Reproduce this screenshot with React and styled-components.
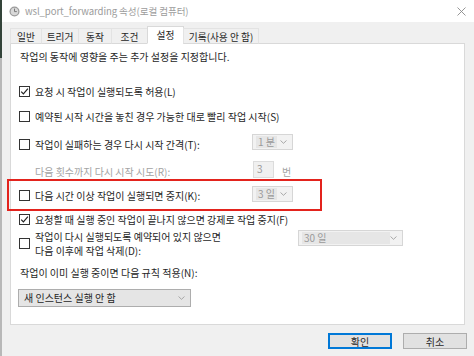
import React from "react";
import styled, { createGlobalStyle } from "styled-components";

const Global = createGlobalStyle`
  html, body { margin: 0; padding: 0; }
  body {
    width: 474px; height: 356px; overflow: hidden;
    font-family: "Noto Sans CJK KR", "Noto Sans", sans-serif;
    font-size: 10px; color: #262626; background: #f0f0f0;
  }
`;

const Screen = styled.div`
  display: flex; width: 474px; height: 356px;
`;
const EdgeStrip = styled.div`
  width: 2px; flex: 0 0 2px;
  background: linear-gradient(#34443a 0, #34443a 58px, #b8b8b8 58px, #b8b8b8 100%);
`;
const Window = styled.div`
  flex: 1; display: flex; flex-direction: column; background: #f0f0f0;
`;
const TitleBar = styled.div`
  height: 22px; background: #fff; display: flex; align-items: center;
  padding: 0 8px 0 7px; gap: 5px;
`;
const TitleText = styled.span`
  flex: 1; color: #9c9c9c; font-size: 9.6px; letter-spacing: -0.1px;
`;
const CloseBtn = styled.div`
  width: 10px; height: 10px; display: flex; align-items: center; justify-content: center;
`;
const Body = styled.div`
  flex: 1; display: flex; flex-direction: column; padding: 4px 9px 0 8px;
`;
const TabStrip = styled.div`
  display: flex; align-items: flex-end; height: 18px; margin-bottom: -1px;
  position: relative; z-index: 1;
`;
const Tab = styled.div`
  width: ${p => p.$w}px; height: ${p => (p.$active ? 18 : 16)}px;
  box-sizing: border-box; display: flex; align-items: center; justify-content: center;
  background: ${p => (p.$active ? "#fff" : "#f0f0f0")};
  border: 1px solid #e3e3e3;
  margin-right: -1px; padding-top: ${p => (p.$active ? 0 : 1)}px;
  color: #262626; font-size: 9.7px;
  border-color: ${p => (p.$active ? "#d9d9d9" : "#e3e3e3")};
  border-bottom-color: ${p => (p.$active ? "#fff" : "#d9d9d9")};
`;
const Panel = styled.div`
  height: 282px; box-sizing: border-box; background: #fff;
  border: 1px solid #d9d9d9; padding: 0 0 0 9px;
  display: flex; flex-direction: column;
`;
const Row = styled.div`
  height: ${p => p.$h}px; margin-top: ${p => p.$mt || 0}px;
  display: flex; align-items: ${p => p.$align || "center"};
  color: #262626;
`;
const Lead = styled.div`
  width: ${p => p.$w}px; flex: 0 0 ${p => p.$w}px;
  display: flex; align-items: center; align-self: center;
  margin-left: ${p => p.$ml || 0}px; padding-left: ${p => p.$pl || 0}px;
  box-sizing: border-box;
`;
const Highlight = styled.div`
  height: 32px; box-sizing: border-box; width: 315px; margin-left: -13px;
  border: 2px solid #e3231d; display: flex; align-items: center; padding-left: 10px;
`;
const Box = styled.div`
  width: 11px; height: 11px; box-sizing: border-box; flex: 0 0 11px;
  border: 1px solid #333; background: #fff; margin-right: 5px;
  display: flex; align-items: center; justify-content: center;
`;
const Label = styled.div`
  line-height: ${p => p.$lh || 13}px; white-space: nowrap;
  color: ${p => (p.$disabled ? "#a3a3a3" : "inherit")};
  margin-top: ${p => p.$mt || 0}px;
`;
const Combo = styled.div`
  width: ${p => p.$w}px; height: ${p => p.$h || 16}px; box-sizing: border-box;
  border: 1px solid ${p => (p.$enabled ? "#adadad" : "#d6d6d6")};
  background: ${p => (p.$enabled ? "#e5e5e5" : "#f2f2f2")};
  display: flex; align-items: center; justify-content: space-between;
  padding: 0 5px 0 3px; align-self: ${p => (p.$top ? "flex-start" : "center")};
  margin-top: ${p => p.$mt || 0}px;
  color: ${p => (p.$enabled ? "#262626" : "#9a9a9a")};
`;
const ComboValue = styled.span`
  background: ${p => (p.$enabled ? "transparent" : "#e6e6e6")};
  padding: 0 2px; flex: ${p => (p.$fill ? 1 : "0 0 auto")}; line-height: 12px;
`;
const SpinBox = styled.div`
  width: 21px; height: 17px; box-sizing: border-box; border: 1px solid #dcdcdc;
  background: #f0f0f0; color: #9a9a9a; padding-left: 3px; line-height: 14px;
  margin-right: 8px;
`;
const Footer = styled.div`
  display: flex; justify-content: flex-end; gap: 11px; padding: 8px 0 0; margin-right: -2px;
`;
const Button = styled.div`
  width: 64px; height: 16px; box-sizing: border-box; display: flex;
  align-items: center; justify-content: center; background: #e1e1e1;
  border: ${p => (p.$primary ? "2px solid #0078d7" : "1px solid #adadad")};
  color: #262626;
`;

const Chevron = () => (
  <svg width="7" height="4" viewBox="0 0 7 4">
    <path d="M0.5 0.5 L3.5 3.3 L6.5 0.5" fill="none" stroke="#a0a0a0" strokeWidth="0.9" />
  </svg>
);
const Check = () => (
  <svg width="9" height="9" viewBox="0 0 9 9">
    <path d="M1.2 4.6 L3.4 6.9 L7.9 1.6" fill="none" stroke="#222" strokeWidth="1.2" />
  </svg>
);
const Clock = () => (
  <svg width="11" height="11" viewBox="0 0 11 11">
    <circle cx="5.5" cy="5.5" r="5" fill="#9a9a9a" />
    <circle cx="5.5" cy="5.5" r="3.8" fill="#d8d8d8" />
    <path d="M5.5 2.6 V5.6 H7.8" fill="none" stroke="#7a7a7a" strokeWidth="1" />
  </svg>
);

const CheckBox = ({ checked }) => <Box>{checked && <Check />}</Box>;

const tabs = [
  { t: "일반", w: 32 },
  { t: "트리거", w: 38 },
  { t: "동작", w: 34 },
  { t: "조건", w: 37 },
  { t: "설정", w: 37, active: true },
  { t: "기록(사용 안 함)", w: 76 },
];

export default function App() {
  return (
    <>
      <Global />
      <Screen>
        <EdgeStrip />
        <Window>
          <TitleBar>
            <Clock />
            <TitleText>wsl_port_forwarding 속성(로컬 컴퓨터)</TitleText>
            <CloseBtn>
              <svg width="9" height="9" viewBox="0 0 9 9">
                <path d="M0.5 0.5 L8.5 8.5 M8.5 0.5 L0.5 8.5" stroke="#8a8a8a" strokeWidth="0.9" />
              </svg>
            </CloseBtn>
          </TitleBar>
          <Body>
            <TabStrip>
              {tabs.map(tab => (
                <Tab key={tab.t} $w={tab.w} $active={tab.active}>{tab.t}</Tab>
              ))}
            </TabStrip>
            <Panel>
              <Row $h={24}>
                <Label>작업의 동작에 영향을 주는 추가 설정을 지정합니다.</Label>
              </Row>
              <Row $h={24} $mt={11}>
                <Lead $w={233} $ml={-1}>
                  <CheckBox checked />
                  <Label>요청 시 작업이 실행되도록 허용(L)</Label>
                </Lead>
              </Row>
              <Row $h={24} $mt={1}>
                <Lead $w={320} $ml={-1}>
                  <CheckBox />
                  <Label>예약된 시작 시간을 놓친 경우 가능한 대로 빨리 작업 시작(S)</Label>
                </Lead>
              </Row>
              <Row $h={24} $mt={4}>
                <Lead $w={233} $ml={-1}>
                  <CheckBox />
                  <Label>작업이 실패하는 경우 다시 시작 간격(T):</Label>
                </Lead>
                <Combo $w={41} $top $mt={2}>
                  <ComboValue>1 분</ComboValue>
                  <Chevron />
                </Combo>
              </Row>
              <Row $h={20} $mt={3}>
                <Lead $w={233} $pl={15}>
                  <Label $disabled $mt={4}>다음 횟수까지 다시 시작 시도(R):</Label>
                </Lead>
                <SpinBox>3</SpinBox>
                <Label $disabled $mt={4}>번</Label>
              </Row>
              <Highlight>
                <Lead $w={233}>
                  <CheckBox />
                  <Label>다음 시간 이상 작업이 실행되면 중지(K):</Label>
                </Lead>
                <Combo $w={41} $mt={-3}>
                  <ComboValue>3 일</ComboValue>
                  <Chevron />
                </Combo>
              </Highlight>
              <Row $h={16}>
                <Lead $w={340} $ml={-1}>
                  <CheckBox checked />
                  <Label>요청할 때 실행 중인 작업이 끝나지 않으면 강제로 작업 중지(F)</Label>
                </Lead>
              </Row>
              <Row $h={33}>
                <Lead $w={279} $ml={-1}>
                  <CheckBox />
                  <Label $lh={14}>
                    작업이 다시 실행되도록 예약되어 있지 않으면
                    <br />
                    다음 이후에 작업 삭제(D):
                  </Label>
                </Lead>
                <Combo $w={105} $top $mt={3}>
                  <ComboValue $fill>30 일</ComboValue>
                  <Chevron />
                </Combo>
              </Row>
              <Row $h={22}>
                <Label $mt={3}>작업이 이미 실행 중이면 다음 규칙 적용(N):</Label>
              </Row>
              <Row $h={18} $mt={7}>
                <Lead $w={175} $ml={-2}>
                  <Combo $w={173} $h={18} $enabled>
                    <ComboValue $enabled $fill>새 인스턴스 실행 안 함</ComboValue>
                    <Chevron />
                  </Combo>
                </Lead>
              </Row>
            </Panel>
            <Footer>
              <Button $primary>확인</Button>
              <Button>취소</Button>
            </Footer>
          </Body>
        </Window>
      </Screen>
    </>
  );
}
